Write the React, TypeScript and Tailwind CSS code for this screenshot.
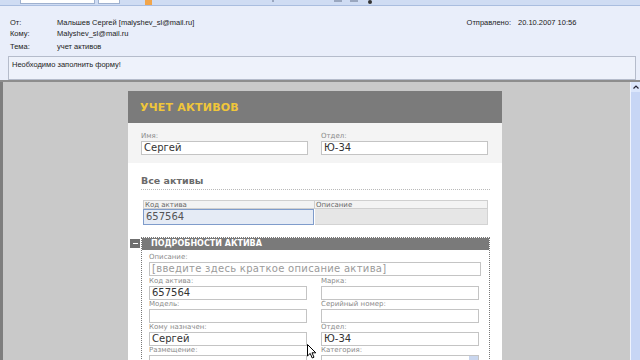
import React from "react";

const font = { fontFamily: "'DejaVu Sans', 'Liberation Sans', sans-serif" };

function Field({
  label,
  value,
  className = "",
  select = false,
}: {
  label: string;
  value?: string;
  className?: string;
  select?: boolean;
}) {
  return (
    <div className={`flex flex-col ${className}`}>
      <div className="text-[7px] leading-[8px] text-[#8a8a8a] h-[9px]">{label}</div>
      <div className="relative h-[14px] border border-[#c4c4c4] bg-white px-[2px] text-[10px] leading-[12px] text-[#333]">
        {value}
        {select && (
          <div className="absolute right-0 top-0 h-[12px] w-[9px] bg-[#c9d6ee] flex items-center justify-center">
            <svg width="5" height="4" viewBox="0 0 5 4">
              <path d="M0.5 1 L2.5 3 L4.5 1" fill="none" stroke="#345" strokeWidth="1" />
            </svg>
          </div>
        )}
      </div>
    </div>
  );
}

export default function App() {
  return (
    <div
      className="relative w-[640px] h-[360px] overflow-hidden flex flex-col bg-[#e9eefa]"
      style={font}
    >
      {/* toolbar strip */}
      <div className="h-[6px] flex items-start bg-[#cfdcf3] border-b border-[#a9bddf]">
        <div className="ml-[20px] w-[75px] h-[4px] bg-white border border-t-0 border-[#9fb1cf]" />
        <div className="ml-[3px] w-[22px] h-[4px] bg-white border border-t-0 border-[#9fb1cf]" />
        <div className="ml-[25px] w-[7px] h-[5px] bg-[#f2a54a]" />
        <div className="ml-[120px] w-[2px] h-[2px] bg-[#9aa7bf]" />
        <div className="ml-[60px] w-[8px] h-[2px] bg-[#9aa7bf]" />
        <div className="ml-[8px] w-[8px] h-[2px] bg-[#9aa7bf]" />
        <div className="ml-[10px] w-[4px] h-[4px] rounded-full bg-[#333]" />
      </div>

      {/* message header */}
      <div className="h-[74px] flex flex-col text-[7.5px] text-[#222]" style={{ fontFamily: "'Liberation Sans', Arial, sans-serif" }}>
        <div className="flex mt-[11px] h-[11px] items-center whitespace-nowrap">
          <span className="ml-[10px] w-[47px]">От:</span>
          <span>Мальшев Сергей [malyshev_sl@mail.ru]</span>
          <span className="ml-auto mr-[7px]">Отправлено:</span>
          <span className="w-[122px]">20.10.2007 10:56</span>
        </div>
        <div className="flex h-[11px] items-center">
          <span className="ml-[10px] w-[47px]">Кому:</span>
          <span>Malyshev_sl@mail.ru</span>
        </div>
        <div className="flex mt-[2px] h-[11px] items-center">
          <span className="ml-[10px] w-[47px]">Тема:</span>
          <span>учет активов</span>
        </div>
        <div className="mx-[8px] mt-[4px] mr-[4px] h-[24px] border border-[#b5bccb] bg-[#eef2fb] px-[3px] pt-[2px]">
          Необходимо заполнить форму!
        </div>
      </div>

      {/* form viewer */}
      <div className="flex-1 flex border-t-2 border-[#8d8d8d] bg-[#c9c9c9]">
        <div className="w-[3px] bg-[#7e7e7e]" />
        <div className="flex-1 pl-[125px] pt-[9px]">
          <div className="w-[374px] h-[300px] bg-white flex flex-col">
            <div className="h-[32px] bg-[#7b7b7b] flex items-center pl-[12px] pt-[3px] text-[11px] font-bold text-[#f0c63a] tracking-[0.2px]">
              УЧЕТ АКТИВОВ
            </div>
            <div className="bg-[#f4f4f4] h-[40px] flex gap-[13px] px-[13px] pt-[9px]">
              <Field label="Имя:" value="Сергей" className="w-[167px]" />
              <Field label="Отдел:" value="Ю-34" className="w-[167px]" />
            </div>
            <div className="px-[13px] pt-[11px]">
              <div className="text-[9.5px] font-bold text-[#6b6b6b] pb-[1px] border-b border-dotted border-[#b9b9b9] w-[349px]">
                Все активы
              </div>
              <div className="ml-[2px] mt-[10px] w-[345px]">
                <div className="flex h-[9px] text-[7px] leading-[8px] text-[#666]">
                  <div className="w-[172px] border border-[#cfcfcf] bg-[#f3f3f3] pl-[1px]">Код актива</div>
                  <div className="flex-1 border border-l-0 border-[#cfcfcf] bg-[#f3f3f3] pl-[1px]">Описание</div>
                </div>
                <div className="flex h-[16px]">
                  <div className="w-[171px] border border-[#7f9ccb] bg-[#e5ebf5] text-[10px] leading-[13px] pl-[2px] text-[#555]">
                    657564
                  </div>
                  <div className="flex-1 ml-[1px] bg-[#e6e6e6] border-r border-b border-[#d3d3d3]" />
                </div>
              </div>
            </div>

            {/* details section */}
            <div className="relative ml-[13px] mt-[12px] w-[349px] flex-1 border-l border-r border-t border-dotted border-[#777]">
              <div className="absolute left-[-12px] top-[1px] w-[10px] h-[9px] bg-[#6f6f6f] flex items-center justify-center">
                <div className="w-[5px] h-[1px] bg-white" />
              </div>
              <div className="h-[12px] bg-[#7a7a7a] pl-[9px] text-[8px] leading-[12px] font-bold text-white">
                ПОДРОБНОСТИ АКТИВА
              </div>
              <div className="px-[7px] pt-[3px] flex flex-col">
                <div className="text-[7px] leading-[8px] text-[#8a8a8a] h-[9px]">Описание:</div>
                <div className="h-[14px] w-[332px] border border-[#c4c4c4] bg-white px-[2px] text-[10px] leading-[12px] text-[#9a9a9a] tracking-[0.3px]">
                  [введите здесь краткое описание актива]
                </div>
                <div className="grid grid-cols-[158px_158px] gap-x-[14px] gap-y-[0px] mt-[1px] [&>div]:h-[23px]">
                  <Field label="Код актива:" value="657564" />
                  <Field label="Марка:" />
                  <Field label="Модель:" />
                  <Field label="Серийный номер:" />
                  <Field label="Кому назначен:" value="Сергей" />
                  <Field label="Отдел:" value="Ю-34" />
                  <Field label="Размещение:" />
                  <Field label="Категория:" select />
                </div>
              </div>
            </div>
          </div>
        </div>
        {/* scrollbar */}
        <div className="w-[10px] bg-[#c7d6f5] border-l border-[#eef3fd] flex flex-col items-center">
          <div className="h-[10px] w-full bg-[#dbe6fb] flex items-center justify-center">
            <svg width="6" height="4" viewBox="0 0 6 4">
              <path d="M0.5 3.5 L3 1 L5.5 3.5" fill="none" stroke="#223" strokeWidth="1.2" />
            </svg>
          </div>
        </div>
      </div>

      {/* mouse cursor */}
      <svg className="absolute left-[307px] top-[344px]" width="10" height="16" viewBox="0 0 10 16">
        <path d="M0.5 0.5 L0.5 12 L3.2 9.4 L5.2 14 L7 13.2 L5 8.8 L8.8 8.8 Z" fill="white" stroke="black" strokeWidth="1" />
      </svg>
    </div>
  );
}
